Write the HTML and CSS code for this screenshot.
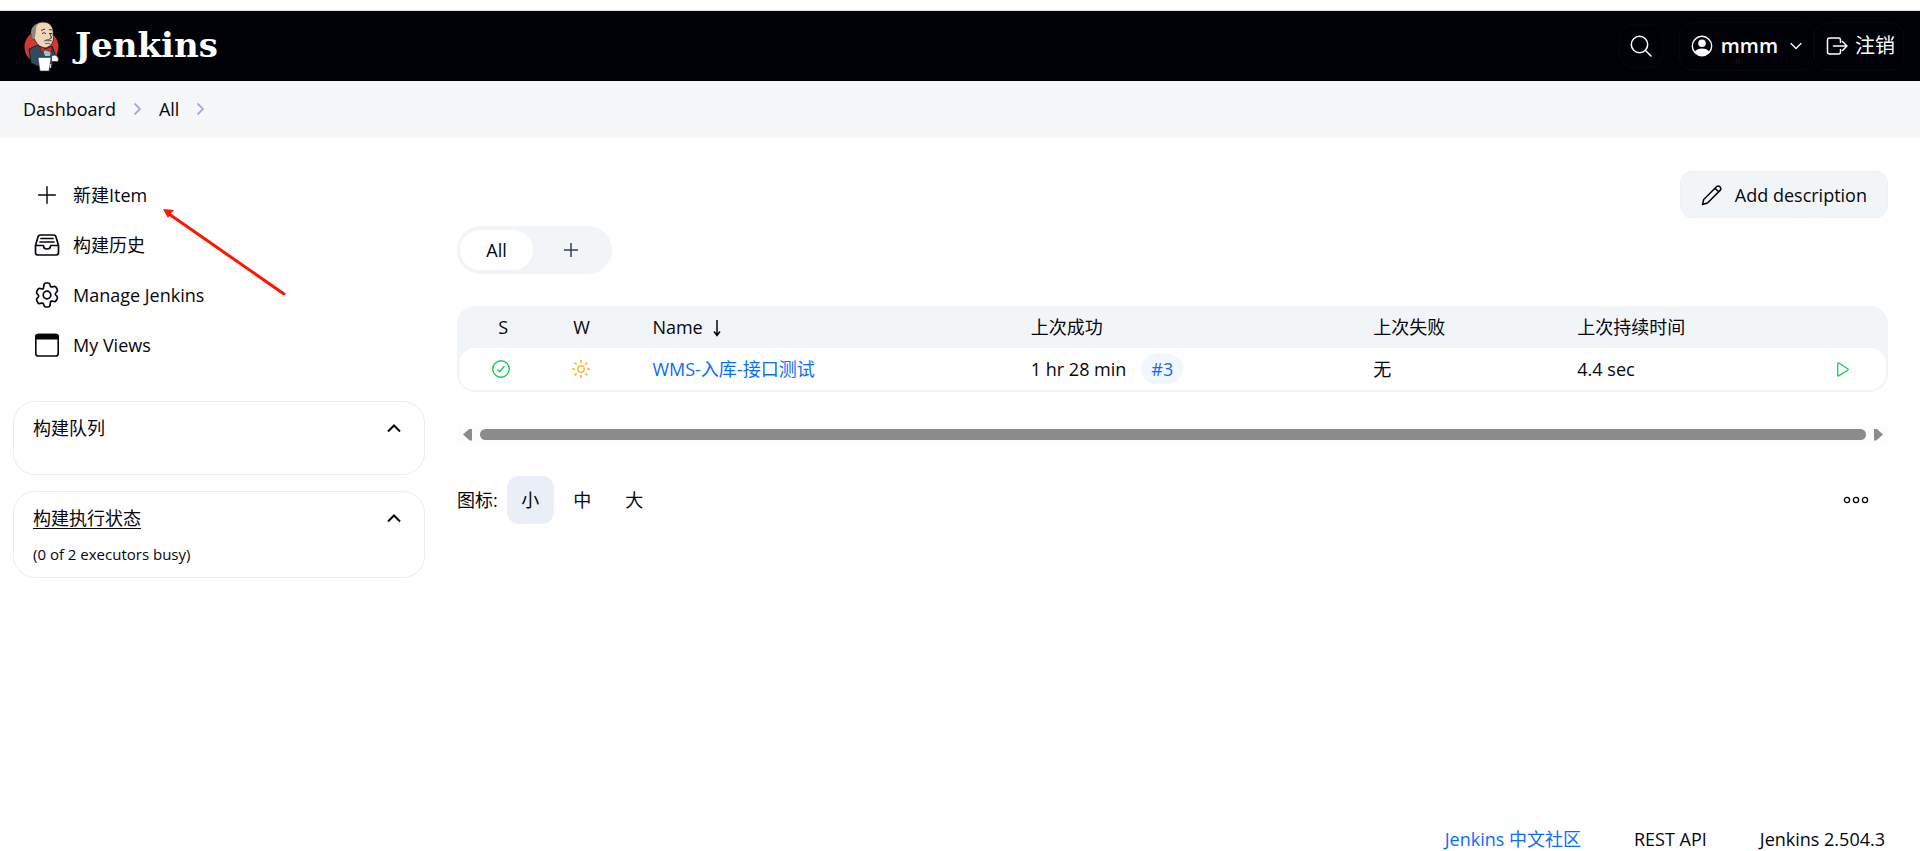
FILE: index.html
```html
<!DOCTYPE html>
<html lang="zh-CN">
<head>
<meta charset="utf-8">
<title>Dashboard - Jenkins</title>
<link rel="stylesheet" href="styles.css">
</head>
<body>
<header class="header">
  <a class="brand" href="#">
    <svg class="brand-logo" viewBox="0 0 36 51" aria-hidden="true">
      <ellipse cx="17.500" cy="26" rx="17" ry="17" fill="#d33833"/>
      <path d="M5 28 L14 24 L22 28 L28 25 L31 33 L28 44 L25 46 L14 45 L7 42 Z" fill="#2f4b5c" stroke="#1b1b22"/>
      <path d="M7.500 14 C6 6 13 1 19 1 C27 1 30 7 29 14 C31 20 27 26 21 27 C15 26 12 22 10.500 18 C8 18 7 16 7.500 14 Z" fill="#f0d6b7" stroke="#1b1b22" stroke-width=".8"/>
      <path d="M7.500 14 C6 8 10 3 15 2.500 C11 5 12.500 9 11.500 13 L10.500 18 C8 18 7 16 7.500 14Z" fill="#8d8a86"/>
      <path d="M17 9.500l4-1.500M25 8.500l3 .5M18 12.500q2-1.500 4 0M25 12.500h3M26 12.500l1.500 4.500-2 .5" fill="none" stroke="#2a2522" stroke-width=".9"/>
      <path d="M19.500 20.500 C21 17.500 27 17 28 20.500 C26 20 22 20 19.500 20.500Z" fill="#6d6b6d"/>
      <path d="M21 22.500h5" stroke="#6b4a3a" stroke-width=".8"/>
      <path d="M19 29l8 0 -1 6 -5 0Z" fill="#9fc1d3"/>
      <path d="M16 25.500L21.500 28 27.500 25.500 27.500 31 21.500 29 17 31Z" fill="#d92b26" stroke="#5c1512" stroke-width=".6"/>
      <path d="M14 36.500L27 36.500 25 50 16 50Z" fill="#fff" stroke="#333" stroke-width=".6"/>
      <path d="M27.500 35q3.500-2 5.500 0 2.500 3 1 5.500l-6.500 0Z" fill="#fff" stroke="#333" stroke-width=".8"/>
      <path d="M26.500 43v4" stroke="#cfd6da" stroke-width="1.500"/>
    </svg>
    <span class="brand-name">Jenkins</span>
  </a>
  <nav class="header-actions">
    <button class="head-btn head-search" aria-label="Search">
      <svg class="i22" viewBox="0 0 22 22"><circle cx="9.500" cy="9.500" r="8.200" fill="none" stroke="currentColor" stroke-width="1.500"/><path d="M15.500 15.500l5.500 5.500" stroke="currentColor" stroke-width="1.500" stroke-linecap="round"/></svg>
    </button>
    <a class="head-btn head-user" href="#">
      <svg class="i22" viewBox="0 0 22 22"><circle cx="11" cy="11" r="9.700" fill="none" stroke="currentColor" stroke-width="1.400"/><circle cx="11" cy="8.200" r="3.800" fill="currentColor"/><path d="M3.600 17C5 14.400 8 13.400 11 13.400s6 1 7.400 3.600A9.500 9.500 0 0 1 11 20.700 9.500 9.500 0 0 1 3.600 17Z" fill="currentColor"/></svg>
      <span class="user-name">mmm</span>
      <svg class="i12" viewBox="0 0 12 12"><path d="M1 3.500l5 5 5-5" fill="none" stroke="currentColor" stroke-width="1.300" stroke-linecap="round"/></svg>
    </a>
    <a class="head-btn head-logout" href="#">
      <svg class="i22" viewBox="0 0 22 22"><path d="M14.500 14.500V17a2 2 0 0 1-2 2H3.500a2 2 0 0 1-2-2V5a2 2 0 0 1 2-2h9a2 2 0 0 1 2 2v2.500M16.500 6.500L21 11l-4.500 4.500M7.500 11H21" fill="none" stroke="currentColor" stroke-width="1.500" stroke-linecap="round" stroke-linejoin="round"/></svg>
      <span>注销</span>
    </a>
  </nav>
</header>
<nav class="crumbs" aria-label="Breadcrumb">
  <a href="#">Dashboard</a>
  <svg class="crumb-sep" viewBox="0 0 9 14"><path d="M1.500 1.500L7 7l-5.500 5.500" fill="none" stroke="currentColor" stroke-width="1.800"/></svg>
  <a href="#">All</a>
  <svg class="crumb-sep" viewBox="0 0 9 14"><path d="M1.500 1.500L7 7l-5.500 5.500" fill="none" stroke="currentColor" stroke-width="1.800"/></svg>
</nav>
<div class="page">
  <aside class="side">
    <nav class="tasks">
      <a class="task" href="#"><svg class="i26" viewBox="0 0 512 512"><path d="M256 92v328M420 256H92" fill="none" stroke="currentColor" stroke-width="28" stroke-linecap="round"/></svg><span>新建Item</span></a>
      <a class="task" href="#"><svg class="i26" viewBox="0 0 26 26"><path d="M19.500 3H6.500Q4.300 3 3.900 5.200L1.500 13.500V20.500a2.500 2.500 0 0 0 2.500 2.500h18a2.500 2.500 0 0 0 2.500-2.500V13.500L22.100 5.200Q21.700 3 19.500 3ZM1.500 13.500h7.500q.6 0 .6.800 0 2.700 3.400 2.700t3.400-2.700q0-.8.6-.8h7.500M7 6.500h12M6 10h14" fill="none" stroke="currentColor" stroke-width="1.700" stroke-linecap="round" stroke-linejoin="round"/></svg><span>构建历史</span></a>
      <a class="task" href="#"><svg class="i26" viewBox="0 0 26 26"><path d="M10 2.500 Q10.400 1 12 1h2q1.600 0 2 1.500l.5 1.700q.6 1 1.800.7l1.600-.4q1.600-.4 2.300 1l1 1.800q.8 1.400-.4 2.500l-1.100 1.200q-.8 1 0 2l1.100 1.200q1.200 1.100.4 2.500l-1 1.800q-.8 1.400-2.300 1l-1.600-.4q-1.200-.3-1.800.7L16 23.500Q15.600 25 14 25h-2q-1.600 0-2-1.500l-.5-1.700q-.6-1-1.800-.7l-1.600.4q-1.600.4-2.300-1l-1-1.800q-.8-1.400.4-2.500L4.300 15q.8-1 0-2L3.200 11.800Q2 10.700 2.800 9.300l1-1.800q.7-1.400 2.300-1l1.600.4q1.200.3 1.800-.7Z" fill="none" stroke="currentColor" stroke-width="1.700"/><circle cx="13" cy="13" r="3.800" fill="none" stroke="currentColor" stroke-width="1.700"/></svg><span>Manage Jenkins</span></a>
      <a class="task" href="#"><svg class="i26" viewBox="0 0 26 26"><rect x="1.800" y="2.500" width="22.400" height="21.500" rx="2.600" fill="none" stroke="currentColor" stroke-width="1.600"/><path d="M1 7.500V5a3.300 3.300 0 0 1 3.300-3.300h17.400A3.300 3.300 0 0 1 25 5v2.500Z" fill="currentColor"/></svg><span>My Views</span></a>
    </nav>
    <section class="card card-queue">
      <div class="card-head"><span>构建队列</span><button class="fold" aria-label="Collapse build queue"><svg viewBox="0 0 14 9"><path d="M1 7.500l6-6 6 6" fill="none" stroke="currentColor" stroke-width="2"/></svg></button></div>
    </section>
    <section class="card card-exec">
      <div class="card-head"><a class="exec-link" href="#">构建执行状态</a><button class="fold" aria-label="Collapse executor status"><svg viewBox="0 0 14 9"><path d="M1 7.500l6-6 6 6" fill="none" stroke="currentColor" stroke-width="2"/></svg></button></div>
      <p class="exec-note">(0 of 2 executors busy)</p>
    </section>
  </aside>
  <main class="main">
    <a class="describe" href="#"><svg class="i22" viewBox="0 0 22 22"><path d="M1.500 20.500l1.200-5L15.500 2.700q1.700-1.500 3.600.2 1.600 1.800 0 3.500L6.500 19ZM14 4.200l3.800 3.800" fill="none" stroke="currentColor" stroke-width="1.500" stroke-linejoin="round"/></svg><span>Add description</span></a>
    <div class="tabs">
      <a class="tab tab-on" href="#">All</a>
      <a class="tab tab-new" href="#" aria-label="New view"><svg viewBox="0 0 14 14"><path d="M7 0v14M0 7h14" stroke="currentColor" stroke-width="1.500"/></svg></a>
    </div>
    <table class="jobs">
      <colgroup><col class="c-s"><col class="c-w"><col class="c-name"><col class="c-ok"><col class="c-fail"><col class="c-time"><col class="c-run"></colgroup>
      <thead><tr><th class="mid">S</th><th class="mid">W</th><th>Name<svg class="sort" viewBox="0 0 8 17"><path d="M4 0v15M1 11.500l3 4 3-4" fill="none" stroke="currentColor" stroke-width="1.500"/></svg></th><th>上次成功</th><th>上次失败</th><th>上次持续时间</th><th></th></tr></thead>
      <tbody><tr>
        <td class="mid"><svg class="i18 ok" viewBox="0 0 18 18"><circle cx="9" cy="9" r="8.300" fill="none" stroke="currentColor" stroke-width="1.400"/><path d="M5.500 9.500l2.200 2.300L12.500 6" fill="none" stroke="currentColor" stroke-width="1.400"/></svg></td>
        <td class="mid"><svg class="i18 sun" viewBox="0 0 18 18"><circle cx="9" cy="9" r="3.200" fill="none" stroke="currentColor" stroke-width="1.400"/><path d="M9 0v3M9 15v3M0 9h3M15 9h3M2.600 2.600l2.100 2.100M13.300 13.300l2.100 2.100M2.600 15.400l2.100-2.100M13.300 4.700l2.100-2.100" stroke="currentColor" stroke-width="1.600"/></svg></td>
        <td><a class="link" href="#">WMS-入库-接口测试</a></td>
        <td>1 hr 28 min<a class="build" href="#">#3</a></td>
        <td>无</td><td>4.4 sec</td>
        <td class="run-cell"><button class="run" aria-label="Build now"><svg viewBox="0 0 12 15"><path d="M.7 1.600q0-1 1-.6l9 5.700q.9.800 0 1.500l-9 5.700q-1 .4-1-.6Z" fill="none" stroke="currentColor" stroke-width="1.300"/></svg></button></td>
      </tr></tbody>
    </table>
    <div class="scroll" aria-hidden="true"><span class="arrow arrow-l"></span><span class="thumb"></span><span class="arrow arrow-r"></span></div>
    <div class="sizes">
      <span>图标:</span>
      <button class="size size-on">小</button><button class="size">中</button><button class="size">大</button>
      <button class="more" aria-label="More"><svg viewBox="0 0 26 8"><g fill="none" stroke="currentColor" stroke-width="1.300"><circle cx="4" cy="4" r="2.600"/><circle cx="13" cy="4" r="2.600"/><circle cx="22" cy="4" r="2.600"/></g></svg></button>
    </div>
  </main>
</div>
<footer class="footer"><a class="link" href="#">Jenkins 中文社区</a><a href="#">REST API</a><a href="#">Jenkins 2.504.3</a></footer>
<svg class="pointer" viewBox="0 0 124 88" aria-hidden="true"><path d="M121 85L6 5" stroke="#ff1500" stroke-width="3" stroke-linecap="round"/><path d="M0 0L11 1L7.500 5L5 9Z" fill="#ff1500"/></svg>
</body>
</html>
```
FILE: styles.css
```css
* { box-sizing: border-box; }
body {
  margin: 0;
  padding-top: 10px;
  min-height: 100vh;
  display: flex;
  flex-direction: column;
  position: relative;
  background: #fff;
  color: #06060f;
  font: 18px/24px "Open Sans", "Noto Sans CJK SC", sans-serif;
}
a { color: inherit; text-decoration: none; }
button { font: inherit; color: inherit; background: none; border: 0; padding: 0; }
svg { display: block; flex: none; }
.i12 { width: 12px; height: 12px; }
.i18 { width: 18px; height: 18px; }
.i22 { width: 22px; height: 22px; }
.i26 { width: 26px; height: 26px; }

.header {
  height: 71px;
  border-top: 1px solid #dfe5e8;
  padding: 0 16px 0 24px;
  display: flex;
  align-items: center;
  justify-content: space-between;
  background: #000007;
  color: #fff;
}
.brand { display: flex; align-items: center; gap: 15px; }
.brand-logo { width: 36px; height: 51px; }
.brand-name { font: bold 34px/40px "DejaVu Serif", serif; padding-bottom: 2px; }
.header-actions { display: flex; align-items: center; }
.head-btn { display: flex; align-items: center; height: 49px; border: 1px solid #08080f; border-radius: 14px; }
.head-search { width: 44px; height: 44px; justify-content: center; margin-right: 16px; }
.head-user { padding: 0 11px; }
.user-name { font-weight: 600; font-size: 20px; margin: 0 12px 0 8px; }
.head-logout { padding: 0 8px 0 11px; gap: 7px; font-size: 20px; }

.crumbs { height: 57px; padding: 0 23px 2px; display: flex; align-items: center; gap: 17px; background: #f6f7f9; }
.crumb-sep { width: 9px; height: 14px; color: #9db3d3; }

.page { flex: 1; display: flex; gap: 32px; padding: 32px 32px 0 13px; }
.side { width: 412px; flex: none; }
.tasks { display: flex; flex-direction: column; padding-left: 21px; margin-bottom: 31px; }
.task { display: flex; align-items: center; gap: 13px; height: 50px; }
.card { border: 1px solid #e8ecf5; border-radius: 22px; padding: 14px 19px; margin-bottom: 16px; }
.card-queue { height: 74px; }
.card-exec { height: 87px; }
.card-head { display: flex; justify-content: space-between; align-items: center; }
.fold { padding: 4px; }
.fold svg { width: 14px; height: 9px; }
.exec-link { text-decoration: underline; text-decoration-thickness: 1px; text-underline-offset: 3px; }
.exec-note { margin: 12px 0 0; font-size: 15px; }

.main { flex: 1; display: flex; flex-direction: column; align-items: stretch; padding-top: 1px; }
.describe { align-self: flex-end; display: flex; align-items: center; gap: 12px; height: 47px; padding: 0 20px; border: 1px solid #ecf1f6; border-radius: 12px; background: #f2f5f8; }
.tabs { align-self: flex-start; display: flex; height: 48px; padding: 4px 3px; margin: 8px 0 32px; border-radius: 24px; background: #f1f5f8; }
.tab { display: flex; align-items: center; justify-content: center; width: 73px; border-radius: 20px; }
.tab-on { background: #fff; }
.tab-new { width: 76px; color: #2f405c; }
.tab-new svg { width: 14px; height: 14px; }

.jobs { width: 100%; table-layout: fixed; border-spacing: 0; background: #f2f5f8; border: 2px solid #f2f5f8; border-top: 0; border-radius: 18px; }
.jobs th { height: 42px; padding: 0; font-weight: 400; text-align: left; }
.jobs td { height: 42px; padding: 0; background: #fff; }
.jobs td:first-child { border-radius: 16px 0 0 16px; }
.jobs td:last-child { border-radius: 0 16px 16px 0; }
.jobs .mid { text-align: center; }
.jobs .mid svg { margin: 0 auto; }
.c-s { width: 5.5%; }
.c-w { width: 5.6%; }
.c-name { width: 26.8%; }
.c-ok { width: 24%; }
.c-fail { width: 14.3%; }
.c-time { width: 17.8%; }
.jobs th.mid { padding-left: 10px; }
.jobs td.mid { padding-left: 6px; }
.jobs th:nth-child(2), .jobs td:nth-child(2) { padding-left: 8px; }
.jobs th:nth-child(3), .jobs td:nth-child(3) { padding-left: 35px; }
.jobs th:nth-child(n+4), .jobs td:nth-child(n+4) { padding-left: 31px; }
.jobs .run-cell:last-child { padding-left: 37px; }
.sort { display: inline-block; width: 8px; height: 17px; margin-left: 10px; vertical-align: -3px; }
.ok, .run { color: #1cc85c; }
.sun { color: #fdb52a; }
.link { color: #0b6cff; }
.build { display: inline-block; margin-left: 15px; padding: 3px 10px; border-radius: 15px; background: #f1f6ff; color: #0b6cff; }
.run { display: block; }
.run svg { width: 12px; height: 15px; }

.scroll { display: flex; align-items: center; gap: 8px; height: 19px; margin: 33px 0 32px; padding: 0 5px 0 6px; background: #fcfcfc; }
.thumb { flex: 1; height: 11px; border-radius: 6px; background: #8b8b8b; }
.arrow { width: 9px; height: 12px; background: #8b8b8b; }
.arrow-l { clip-path: polygon(0 50%, 75% 0, 100% 0, 100% 100%, 75% 100%); }
.arrow-r { clip-path: polygon(100% 50%, 25% 0, 0 0, 0 100%, 25% 100%); }

.sizes { display: flex; align-items: center; }
.size { width: 47px; height: 48px; border-radius: 12px; margin-right: 5px; }
.size-on { margin-left: 9px; background: #eaeef6; }
.more { margin-left: auto; padding: 8px 19px; }
.more svg { width: 26px; height: 8px; }

.footer { display: flex; justify-content: flex-end; gap: 53px; padding-right: 35px; height: 24px; }
.pointer { position: absolute; left: 163px; top: 209px; width: 124px; height: 88px; }
```
